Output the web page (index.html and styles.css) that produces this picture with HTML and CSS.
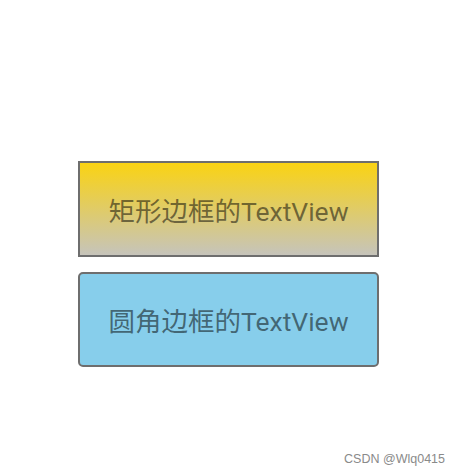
FILE: index.html
```html
<!DOCTYPE html>
<html lang="zh">
<head>
    <meta charset="UTF-8">
    <meta name="viewport" content="width=device-width, initial-scale=1.0">
    <title>TextView 边框</title>
    <link rel="stylesheet" href="styles.css">
</head>
<body>
    <div class="screen">
        <div class="box-list">
            <div class="text-box rect-box">矩形边框的TextView</div>
            <div class="text-box round-box">圆角边框的TextView</div>
        </div>
        <div class="watermark">CSDN @Wlq0415</div>
    </div>
</body>
</html>
```
FILE: styles.css
```css
/* Page */
body {
    margin: 0;
    background-color: #ffffff;
    font-family: Roboto, "Noto Sans CJK SC", sans-serif;
}

.screen {
    width: 460px;
    height: 474px;
    display: flex;
    flex-direction: column;
    justify-content: space-between;
    box-sizing: border-box;
    padding: 161px 0 8px 78px;
}

/* The two bordered text views */
.box-list {
    display: flex;
    flex-direction: column;
    gap: 15px;
    width: 301px;
}

.text-box {
    height: 96px;
    box-sizing: border-box;
    border: 2px solid #6e6e6e;
    display: flex;
    align-items: center;
    justify-content: center;
    font-size: 26.5px;
    color: rgba(0, 0, 0, 0.52);
}

.rect-box {
    background: linear-gradient(#fad313, #c6c4bb);
}

.round-box {
    height: 95px;
    background-color: #87ceeb;
    border-radius: 5px;
}

/* Blog watermark */
.watermark {
    align-self: flex-end;
    margin-right: 15px;
    font-family: "Liberation Sans", sans-serif;
    font-size: 12.5px;
    color: #8a8a8a;
}
```
